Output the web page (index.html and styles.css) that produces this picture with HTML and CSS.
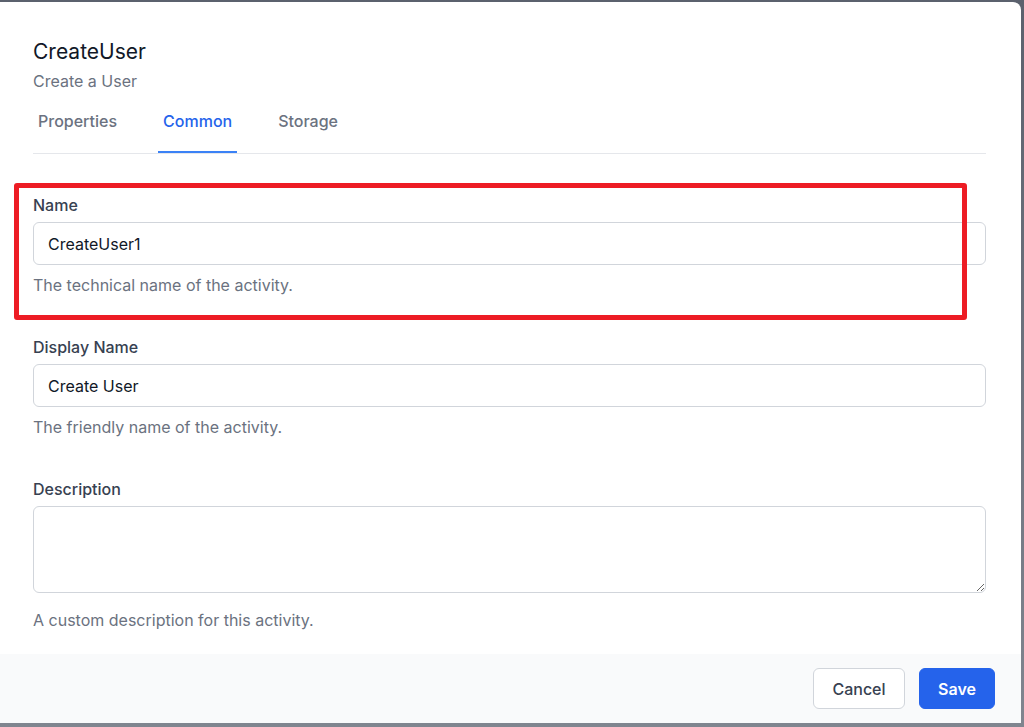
FILE: index.html
```html
<!DOCTYPE html>
<html>
<head>
<meta charset="utf-8">
<link rel="stylesheet" href="styles.css">
</head>
<body>
<div class="backdrop">
  <div class="modal">
    <div class="modal-body">
      <h1 class="title">CreateUser</h1>
      <p class="subtitle">Create a User</p>
      <nav class="tabs">
        <span class="tab">Properties</span>
        <span class="tab active">Common</span>
        <span class="tab">Storage</span>
      </nav>
      <div class="fields">
        <div class="field">
          <label class="label">Name</label>
          <input class="input" type="text" value="CreateUser1">
          <p class="help">The technical name of the activity.</p>
        </div>
        <div class="field">
          <label class="label">Display Name</label>
          <input class="input" type="text" value="Create User">
          <p class="help">The friendly name of the activity.</p>
        </div>
        <div class="field">
          <label class="label">Description</label>
          <textarea class="textarea"></textarea>
          <p class="help help-ta">A custom description for this activity.</p>
        </div>
      </div>
      <div class="highlight"></div>
    </div>
    <div class="footer">
      <button class="btn btn-cancel">Cancel</button>
      <button class="btn btn-save">Save</button>
    </div>
  </div>
</div>
</body>
</html>
```

FILE: styles.css
```css
* { box-sizing: border-box; }
html, body { margin: 0; padding: 0; }
body {
  font-family: Inter, "Noto Sans", sans-serif;
  width: 1024px;
  height: 727px;
  overflow: hidden;
  background: linear-gradient(#5b616d, #80858f);
}
.backdrop {
  padding-top: 2px;
  height: 727px;
}
.modal {
  width: 1021px;
  height: 721px;
  background: #fff;
  border-radius: 0 8px 0 0;
  display: flex;
  flex-direction: column;
  overflow: hidden;
}
.modal-body {
  position: relative;
  flex: 1;
  padding: 36px 35px 0 33px;
}
.title {
  margin: 0;
  font-size: 21px;
  line-height: 28px;
  font-weight: 400;
  color: #111827;
}
.subtitle {
  margin: 3px 0 0;
  font-size: 16px;
  line-height: 24px;
  color: #6b7280;
}
.tabs {
  display: flex;
  gap: 36px;
  margin-top: 16px;
  border-bottom: 1px solid #e5e7eb;
}
.tab {
  padding: 0 5px 18px;
  font-size: 16px;
  line-height: 24px;
  font-weight: 500;
  color: #6b7280;
  border-bottom: 2px solid transparent;
}
.tab.active {
  color: #2563eb;
  border-bottom-color: #3b82f6;
}
.fields {
  display: flex;
  flex-direction: column;
  gap: 38px;
  padding-top: 39px;
}
.field {
  display: flex;
  flex-direction: column;
}
.label {
  font-size: 16px;
  line-height: 24px;
  font-weight: 500;
  color: #374151;
  margin-bottom: 5px;
}
.input, .textarea {
  width: 100%;
  border: 1px solid #d1d5db;
  border-radius: 6px;
  font-family: inherit;
  font-size: 16px;
  color: #111827;
  background: #fff;
  padding: 0 14px;
  margin: 0;
  outline: none;
}
.input { height: 43px; }
.textarea {
  height: 87px;
  padding: 10px 14px;
  resize: vertical;
  display: block;
}
.help {
  margin: 8px 0 0;
  font-size: 16px;
  line-height: 24px;
  color: #6b7280;
}
.help-ta { margin-top: 15px; }
.highlight {
  position: absolute;
  left: 14px;
  top: 181px;
  width: 953px;
  height: 137px;
  border: 5px solid #ed1c24;
  border-radius: 3px;
  pointer-events: none;
}
.footer {
  background: #f9fafb;
  height: 69px;
  display: flex;
  justify-content: flex-end;
  align-items: center;
  gap: 14px;
  padding: 0 26px;
}
.btn {
  height: 41px;
  border-radius: 6px;
  font-family: inherit;
  font-size: 16px;
  padding: 0;
  cursor: pointer;
}
.btn-cancel {
  width: 92px;
  background: #fff;
  border: 1px solid #d1d5db;
  color: #374151;
  font-weight: 500;
}
.btn-save {
  width: 76px;
  background: #2563eb;
  border: 1px solid #2563eb;
  color: #fff;
  font-weight: 600;
}
```
